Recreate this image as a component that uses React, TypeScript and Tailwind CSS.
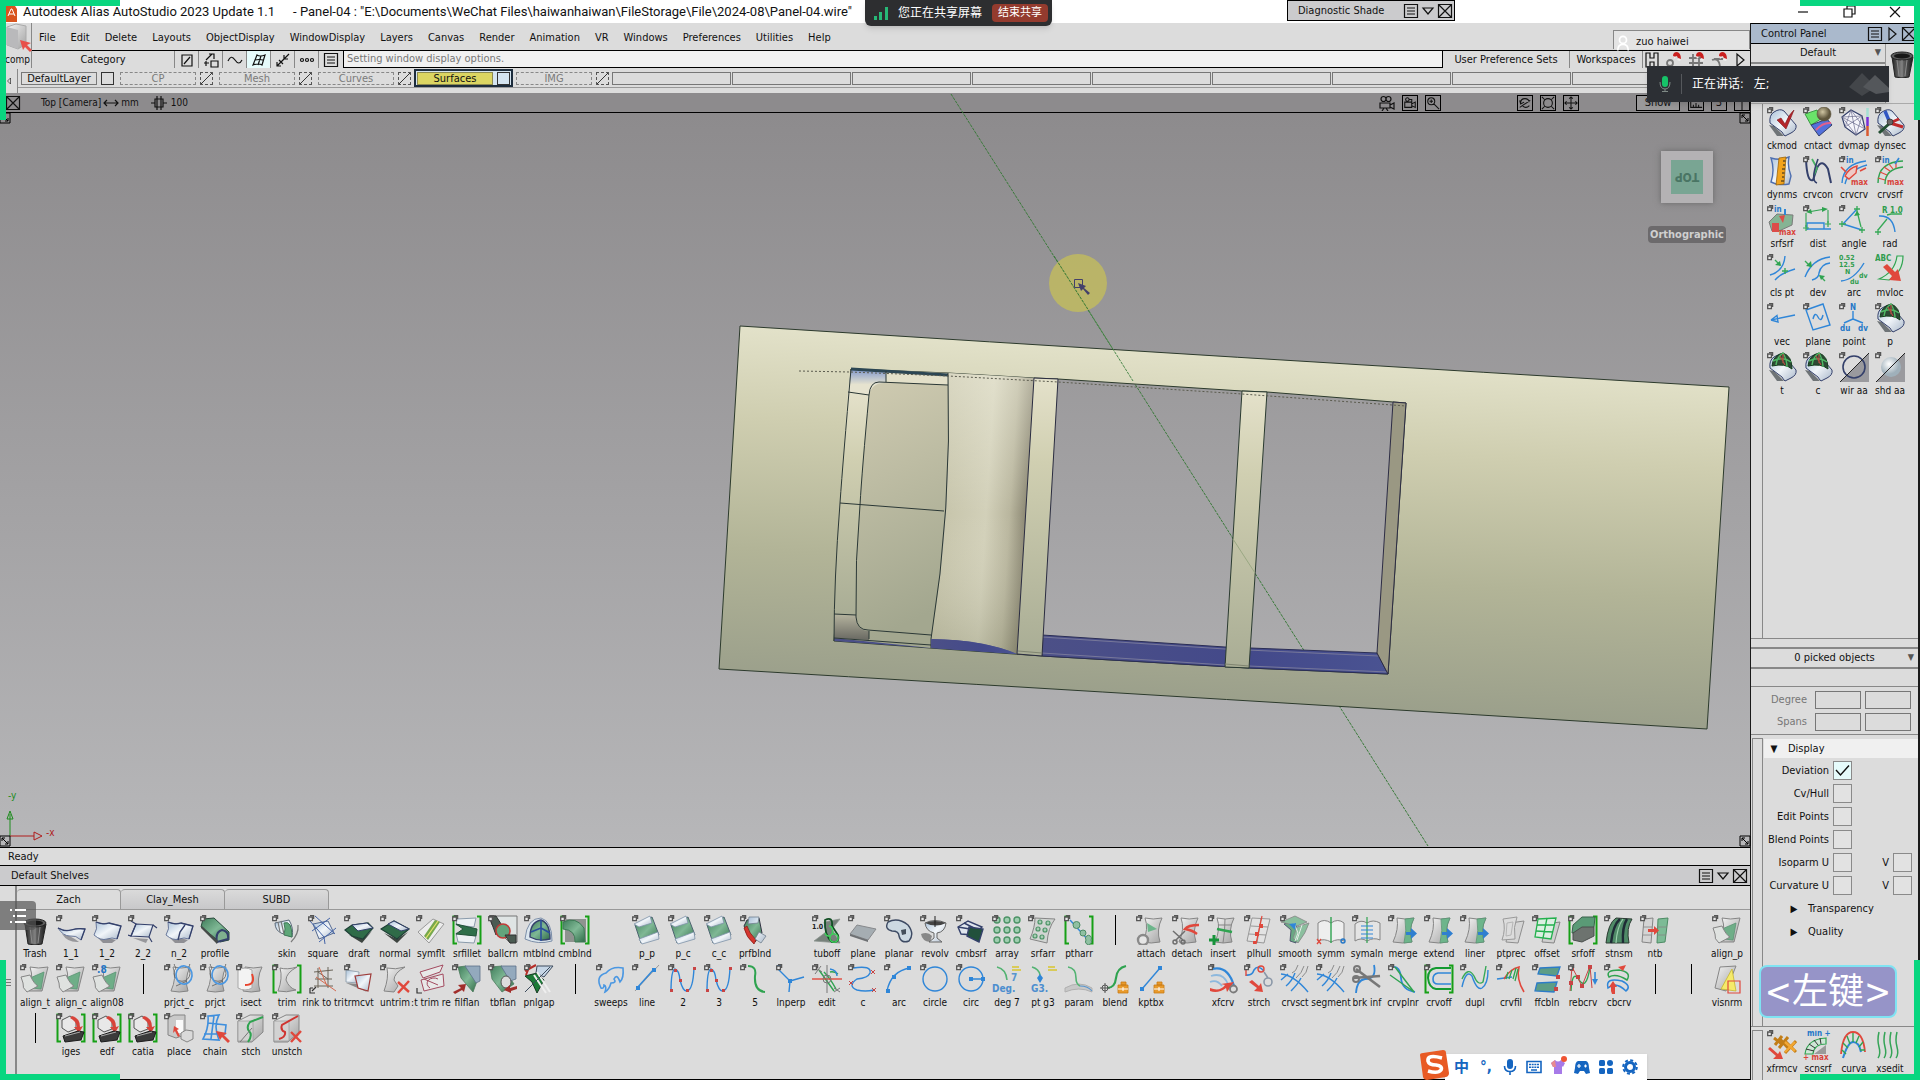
import React from "react";

// [path, fill, stroke, stroke width] or a text label { t, x, y, c, s }
type Shape =
  | [string, string?, string?, number?]
  | { t: string; x: number; y: number; c: string; s?: number };

const NAVY = "#34406b";
const BLUE = "#2f86d8";
const GREEN = "#2fa350";
const RED = "#e0483c";
const GREY = "#858585";
const STEEL = "url(#steel)";
const LEAF = "url(#leaf)";
const ASH = "url(#ash)";

const line = (d: string, c = BLUE, w = 1.4): Shape => [d, "none", c, w];

const brackets: Shape[] = [
  line("M5 1.5H1.5V28.5H5", "#16a016", 2),
  line("M25 1.5H28.5V28.5H25", "#16a016", 2),
];

const sheet: Shape[] = [
  ["M6 6Q15 8 26 2Q20 14 27 24Q17 27 9 29Q12 17 6 6Z", STEEL, "#8d8d8d", 1],
];
const greySheet: Shape[] = [
  ["M9 3Q17 5 26 3Q20 15 24 27Q15 29 7 27Q13 14 9 3Z", ASH, GREY, 1],
];
const patch: Shape[] = [
  ["M5 22L12 22L24 25L20 28H11Z", "#8f8f94", "none"],
  ["M4 7Q11 10 17 8L29 11L25 24Q20 22 15 24Q9 26 2 20Q6 14 4 7Z", STEEL, "#5c6d94", 0.9],
  line("M4 7Q11 10 17 8L29 11L25 24", NAVY, 1.3),
];
const greenBlock: Shape[] = [
  ["M3 10L20 2L27 20L9 28Z", LEAF, "#4d6472", 1],
  ["M2 9L7 12L20 8L18 1Z", STEEL, "#7f93a8", 0.8],
  ["M7 24L10 29L27 24L26 17Z", STEEL, "#7f93a8", 0.8],
];
const tube: Shape[] = [
  ["M2 18L10 29L17 29L7 19Z", "#6f7477", "none"],
  ["M3 16Q2 8 7 5Q13 1 17 4L29 18Q30 23 24 26L18 29Q16 27 15 25Z", STEEL, NAVY, 1],
];
const dome: Shape[] = [
  ...tube,
  ["M5 14Q6 3 16 1Q25 4 25 17Q18 11 5 14Z", "#2d4a35", "#123d1c", 1],
  line("M9 13Q10 5 16 1Q20 8 20 15M6 9Q16 4 24 10", "#4fb965", 1.4),
  line("M13 4L18 13M16 2V11", "#b24c43", 1.2),
];
const arrowOut: Shape[] = [
  ["M9 3Q17 5 26 3Q20 15 24 27Q15 29 5 27Q11 14 9 3Z", ASH, GREY, 1],
  ["M17 4L26 3Q20 15 24 27L16 28Q19 15 17 4Z", "#6db58b", "#5a9473", 0.8],
  ["M18 17H23V13L29 18.5L23 24V20H18Z", "#2f7fd0", "none"],
];
const alignPair: Shape[] = [
  ["M10 3Q18 5 28 3L22 27H9Q14 15 10 3Z", ASH, GREY, 1],
  ["M10 14L24 8L21 25L12 24Z", "#6fae88", "#5a9473", 0.8],
  ["M1 13L10 11Q14 20 18 22L7 28Q2 24 3 19Z", "#dfe2e0", GREY, 1],
];
const crossCircle: Shape[] = [
  ...greySheet,
  line("M12 4A8 8 0 1 0 24 4A8 8 0 1 0 12 4M12 22L23 17", "#5c5c5c", 0.8),
  line("M12 10A8 9 0 1 0 28 12A8 9 0 1 0 12 10", "#4a97e2", 1.7),
];
const nCurve: Shape[] = [
  line("M3 28Q3 6 7 5Q11 6 12 16Q15 28 19 27Q25 26 26 4"),
  ["M2 25H5V28H2ZM6 5H9V8H6ZM11 15H14V18H11ZM18 25H21V28H18ZM25 3H28V6H25Z", "#c84444", "none"],
];
const box: Shape[] = [
  ["M2 8L14 2H27V19L16 29H2Z", ASH, GREY, 1],
  ["M2 8H17V28H2Z", "#d2d2d2", "#a0a0a0", 0.8],
];
const exporter: Shape[] = [
  ...brackets,
  ["M6 7L14 3L20 7V16L12 19L6 15Z", "#e8e8e8", "#555", 1],
  ["M16 3Q24 5 24 14L27 13L23 20L18 14H21Q20 8 14 5Z", "#d8433a", "none"],
  ["M7 23L22 18L28 19L25 27L9 29Z", "#3b3b3b", "#1b1b1b", 1],
  line("M9 23L24 19", "#a9a9a9", 1),
];
const bin: Shape[] = [
  ["M5 9L8 29Q15 31 22 29L26 9Z", "url(#bin)", "#222", 1],
  ["M4 8A11 4 0 1 0 26 8A11 4 0 1 0 4 8", "#5d5d5d", "#222", 1],
  ["M7 8A8 2.4 0 1 0 23 8A8 2.4 0 1 0 7 8", "#171717", "none"],
  line("M10 12L12 28M15 12V29M20 12L18 28", "#8c8c8c", 1),
];
const slashes: Shape[] = [
  line("M1 10Q14 11 28 28M6 22Q12 17 15 9M11 27Q18 20 21 14M1 16L8 10"),
  line("M12 9Q16 8 18 1M22 13Q27 9 28 2M16 14Q22 9 24 2", "#8b8b8b", 1),
];
const toolbox: Shape[] = [
  ["M18 21H28V29H18ZM21 18H26V21H21Z", "#e89a2c", "#c97c14", 0.8],
  line("M18 25H28M23 23V27", "#fff", 1),
];

const glyphs: Record<string, Shape[]> = {
  Trash: bin,
  "1_1": [
    ["M6 19Q14 20 23 27Q12 28 6 19Z", "#97979b", "none"],
    ["M2 13Q9 17 15 15Q22 13 29 14L25 25Q20 20 14 21Q7 21 2 13Z", STEEL, "#5c6d94", 0.9],
    line("M2 13Q9 17 15 15Q22 13 29 14L25 25", NAVY, 1.3),
  ],
  "1_2": patch,
  "2_2": [
    ["M5 23L20 24L18 28Z", "#97979b", "none"],
    ["M8 9L25 10L21 22L3 21Z", STEEL, NAVY, 1.2],
    line("M3 6L8 9L3 21L0 20M25 10L29 13M21 22L24 27", NAVY, 1.2),
  ],
  n_2: [...patch, line("M21 10L16 17L14 25", NAVY, 1.4)],
  profile: [
    ["M3 4L14 3L29 17V25L20 27L1 12Z", LEAF, "#27483a", 1],
    ["M17 27Q15 17 22 15Q29 16 28 24Z", "#7fb08e", NAVY, 2],
    ["M1 13L17 29L18 26L2 11Z", "#464b49", "none"],
  ],
  skin: [
    ["M3 8L17 5Q22 13 20 22L9 18Q3 15 3 8Z", STEEL, "#5b6a7a", 1],
    ["M12 8Q20 5 20 22L12 20Q14 14 12 8Z", "#5da678", "#3e7a57", 1],
    line("M26 10Q27 19 19 27M6 7L8 17M9 6L12 19", "#7a7a7a", 1.2),
  ],
  square: [
    ["M5 9L20 6L26 18L11 24Z", STEEL, "#556a90", 1],
    line("M2 6L16 22L17 29M7 1L27 19M22 3L4 16M28 13L11 27", "#4464a8", 1),
  ],
  draft: [
    ["M5 20L18 28L28 16L19 24Z", "#3d4440", "none"],
    ["M1 15L8 10L24 8L29 13L19 24L8 21Z", "#2f6b48", "#1d3f36", 1.2],
    ["M8 10L14 16L29 13L23 8Z", STEEL, NAVY, 1],
  ],
  normal: [
    ["M4 18L17 28L28 17L17 24Z", "#3d4440", "none"],
    ["M1 14L14 6L29 14L17 24Z", "#2f6b48", "#1d3f36", 1.2],
    ["M8 9L14 6L29 14L21 16Z", STEEL, NAVY, 1],
  ],
  symflt: [
    ["M2 17L17 4L28 9L13 28Z", "#ededed", "#9a9a9a", 1],
    ["M8 21L19 5L24 7L12 25Z", "#77a84d", "none"],
    line("M10 23L22 6", "#e8e36a", 1.2),
  ],
  srfillet: [
    ...brackets,
    ["M5 4L24 3L22 12L4 10ZM4 18L24 21L22 28L6 27Z", "#edf1f4", "#8a9bab", 1],
    ["M4 9L25 14L24 21L4 19L11 14Z", "#2f6f4a", "#235339", 1],
  ],
  ballcrn: [
    ["M1 1H29V27L22 28L14 20L4 10Z", "#dfe4e4", "#777", 1],
    ["M1 1H8L15 12L8 20Z", "#4b5b52", "#333", 1],
    ["M8 16A7 7 0 1 0 22 16A7 7 0 1 0 8 16", "#63a37c", "#c03a36", 1.6],
    ["M17 20L28 20V28H22Z", "#4b5b52", "#333", 1],
  ],
  mtblnd: [
    ["M1 24Q3 3 17 3Q28 6 28 26Q14 30 1 24Z", "#dbe6ee", "#7c8ea8", 1],
    ["M6 22Q6 7 17 5Q26 8 26 24Q15 27 6 22Z", LEAF, NAVY, 1.4],
    line("M17 5V13L7 17M17 13L26 18M17 13V26", "#2a4f9c", 1.6),
  ],
  cmblnd: [
    ...brackets,
    ["M5 4H26V27H5Z", "#8e938f", "none"],
    ["M3 7Q16 1 24 13L25 27H15Q16 15 3 14Z", LEAF, "#3c7a55", 1],
  ],
  p_p: greenBlock,
  p_c: greenBlock,
  c_c: greenBlock,
  prfblnd: [
    ["M7 5L19 3L22 18L15 27Q7 19 4 11Z", LEAF, "#334", 1],
    ["M4 13Q6 22 14 29L16 25Q9 18 7 11Z", "#d5362e", "#8c1d18", 0.8],
    ["M9 2H19L18 8L8 9ZM19 17L26 21L21 28L15 24Z", STEEL, "#71808f", 0.8],
  ],
  tuboff: [
    ["M12 7L28 4L20 14L28 28L2 26L14 17Z", "#77817b", "#8b948f", 0.8],
    { t: "1.0", x: 0, y: 14, c: "#222", s: 7 },
    ["M13 5Q21 1 20 11L26 20Q28 28 20 27Q12 20 13 5Z", "none", "#124f24", 1.8],
    line("M17 11A4 5 0 1 1 13 18M18 22A4 4 0 1 1 26 24A4 4 0 1 1 18 22", "#3fd05b", 1.4),
  ],
  plane: [["M9 10L28 14L20 25L2 19Z", "#a5adb2", "#87898c", 1], ["M2 19L20 25L20 27L2 21Z", "#6d7073", "none"]],
  planar: [
    ["M4 7Q14 2 24 10Q31 19 25 26Q17 29 15 21Q15 16 8 16Q0 14 4 7Z", "#ccd9e2", "#3d4a63", 1.4],
    ["M17 15L22 14V19L18 20Z", "#444f5b", "none"],
  ],
  revolv: [
    ["M1 19Q8 16 12 21L10 27Q2 26 1 19Z", "#888", "none"],
    ["M5 8Q15 3 26 8Q25 17 17 18L17 23L22 27H9L14 23V18Q6 16 5 8Z", STEEL, "#666", 1],
    ["M5 8Q15 4 26 8Q16 13 5 8Z", "#444", "none"],
    line("M15 1V12", "#222", 1),
  ],
  cmbsrf: [
    ["M2 12L12 6L26 12L17 20L5 19Z", "#e0e6ee", NAVY, 1.4],
    ["M13 12L27 14L23 27L11 21Z", "#22513c", NAVY, 1.4],
    line("M8 8L18 13M2 12L14 14", NAVY, 1.4),
  ],
  array: [
    [
      "M2 5A3 3 0 1 0 8 5A3 3 0 1 0 2 5M12 5A3 3 0 1 0 18 5A3 3 0 1 0 12 5M22 5A3 3 0 1 0 28 5A3 3 0 1 0 22 5M2 15A3 3 0 1 0 8 15A3 3 0 1 0 2 15M12 15A3 3 0 1 0 18 15A3 3 0 1 0 12 15M22 15A3 3 0 1 0 28 15A3 3 0 1 0 22 15M2 25A3 3 0 1 0 8 25A3 3 0 1 0 2 25M12 25A3 3 0 1 0 18 25A3 3 0 1 0 12 25M22 25A3 3 0 1 0 28 25A3 3 0 1 0 22 25",
      "#9fceb0",
      "#4d9467",
      1.4,
    ],
  ],
  srfarr: [
    ["M7 3L27 4Q20 13 19 28L2 24Q7 12 7 3Z", "#d2d5d3", GREY, 1],
    [
      "M10 7A2 2 0 1 0 14 7A2 2 0 1 0 10 7M18 8A2 2 0 1 0 22 8A2 2 0 1 0 18 8M8 14A2 2 0 1 0 12 14A2 2 0 1 0 8 14M15 15A2 2 0 1 0 19 15A2 2 0 1 0 15 15M5 21A2 2 0 1 0 9 21A2 2 0 1 0 5 21M12 22A2 2 0 1 0 16 22A2 2 0 1 0 12 22",
      "#a8cdb5",
      "#4d9467",
      1.2,
    ],
  ],
  ptharr: [
    ...brackets,
    line("M6 5L26 27"),
    [
      "M9 10A3 3 0 1 0 16 10A3 3 0 1 0 9 10M16 18A3 3 0 1 0 22 18A3 3 0 1 0 16 18M22 25A3 3 0 1 0 27 25A3 3 0 1 0 22 25",
      "#8fc0a2",
      "#4d8b64",
      1,
    ],
  ],
  attach: [
    ...greySheet,
    ["M11 8L21 14L12 17Z", "#6db58b", "none"],
    ["M2 25A5 5 0 1 0 12 25A5 5 0 1 0 2 25", "#e6e6e6", "#8a8a8a", 2.4],
  ],
  detach: [
    ...greySheet,
    line("M27 10Q16 10 13 14Q20 15 25 19", RED, 2.4),
    line("M1 16L12 26M13 16L3 26M1 27A2 2 0 1 0 5 27A2 2 0 1 0 1 27M9 27A2 2 0 1 0 13 27A2 2 0 1 0 9 27", "#6f6f6f", 1.5),
  ],
  insert: [
    ...greySheet,
    line("M17 4Q17 16 15 28M10 10H23", GREY, 1),
    line("M9 14L24 17", GREEN, 2.4),
    line("M6 20V30M1 25H11", "#16933a", 3),
  ],
  plhull: [
    ["M8 3L26 4L20 28L3 26Z", "#e2e2e2", GREY, 0.8],
    line("M17 3L13 28M7 11L24 12M5 19L22 20", GREY, 0.8),
    line("M18 1L12 29", RED, 1.2),
    ["M15 9H19V13H15ZM11 17H15V21H11ZM9 26H12V29H9Z", RED, "none"],
  ],
  smooth: [
    ["M4 9L14 5L18 16L16 28L10 26L11 15Z", "#6aa884", "#446", 0.8],
    ["M1 7L15 1L27 7L17 11ZM17 12L29 8Q26 18 18 28L13 23Z", "#8bbf9e", GREY, 0.8],
    line("M14 8L18 18L15 26M22 10L17 25", "#e4ece7", 1),
    ["M9 9L16 8L15 15Z", BLUE, "none"],
  ],
  symm: [
    ["M2 8Q8 3 15 8Q22 3 28 8V26Q22 23 15 27Q8 23 2 26Z", "#eeeeee", GREY, 1],
    line("M15 2V28", GREEN, 1.4),
    line("M1 24L5 29M5 24L1 29", RED, 1.3),
    line("M25 26A2 2 0 1 0 29 26A2 2 0 1 0 25 26", "#2477c8", 1.4),
  ],
  symaln: [
    ["M3 9Q9 4 15 8Q21 4 28 8V25Q22 22 15 26Q9 22 3 26Z", "#e4e4e4", GREY, 1],
    line("M15 2V28", GREEN, 1.2),
    line("M9 11H21M9 15H21M9 19H21M9 23H21", BLUE, 1.2),
  ],
  merge: arrowOut,
  extend: arrowOut,
  liner: arrowOut,
  ptprec: [
    ["M14 8L28 6L22 28L10 27Z", "#d5d5d5", "#8e8e8e", 1],
    ["M7 4L21 2Q17 12 19 24L6 25Q10 14 7 4Z", "#dcdcdc", "#9a9a9a", 1],
    line("M11 8L17 7L15 20L10 21Z", "#b5b5b5", 1),
  ],
  offset: [
    ["M14 9L28 7L22 28L10 27Z", "#cfcfcf", GREY, 1],
    ["M6 4L24 3L19 24L3 22Z", "#dcefe2", "#23b04d", 1.3],
    line("M15 3L11 23M5 10L22 10M4 16L21 17", "#23b04d", 1.3),
  ],
  srfoff: [
    ...brackets,
    ["M5 10L14 2H27L26 12L15 16L4 18Z", "#5a9a76", "#38614a", 1],
    ["M5 18L14 12L26 12V21L14 27L5 25Z", "#6d736f", "#4a4f4c", 1],
  ],
  stnsm: [
    ["M2 28Q4 8 12 3L28 4Q22 13 25 28Z", "#4f8a67", "#2c3b32", 1],
    line("M7 28Q9 10 16 4M19 28Q18 12 23 4", "#1f2b36", 2.4),
    line("M12 28Q13 12 19 4", "#9bd1ad", 1.2),
  ],
  ntb: [
    ["M4 4L13 3L11 28L2 27Z", "#d4d4d4", GREY, 1],
    ["M18 4L28 3L25 27L17 28Z", "#7dbb96", "#4d8b64", 1],
    line("M3 12H12M3 20H12M18 12H27M17 20H26", GREY, 0.8),
    ["M8 14H14V11L19 15.5L14 20V17H8Z", RED, "none"],
  ],
  align_p: alignPair,
  align_t: alignPair,
  align_c: alignPair,
  align08: [...alignPair, { t: ".8", x: 5, y: 9, c: "#2477c8", s: 10 }],
  prjct_c: crossCircle,
  prjct: crossCircle,
  isect: [
    ...greySheet,
    ["M2 6Q9 2 16 6V24Q9 28 2 24Z", "#f3f3f3", "#a8a8a8", 1],
    line("M16 10Q20 21 9 21", "#e8452f", 2),
  ],
  trim: [
    ...brackets,
    ["M8 4Q15 6 25 3Q14 9 14 16Q17 24 24 26Q14 29 6 27Q11 14 8 4Z", ASH, GREY, 1],
  ],
  "rink to tri": [
    line("M10 4V24M20 3V24M6 8L25 6M7 15H24M6 22H25M10 8L20 15", "#6a6459", 1),
    line("M8 13L28 27M11 3L19 22", "#d36a50", 1),
    line("M2 24V29H7M2 24H5M4 27L8 23", "#333", 1.2),
  ],
  trmcvt: [
    ["M2 19L14 20L23 28Z", "#888", "none"],
    ["M2 6L15 8L14 19L2 18Z", STEEL, "#8797a6", 0.8],
    ["M11 12L27 10L24 27L14 24Z", STEEL, "#9e3a38", 1.2],
  ],
  untrim: [
    ["M7 4Q15 6 25 3Q14 9 14 16L18 22L14 28L4 27Q9 14 7 4Z", ASH, GREY, 1],
    line("M18 18L29 28M29 17L18 29", RED, 2.4),
  ],
  ":t trim re": [
    ["M4 8L27 1L24 8L7 14ZM5 16L27 10L28 22L8 27Z", "#e8e8e8", "#a34b60", 1],
    line("M8 15L22 21M14 24A5 4 0 0 1 22 15", "#a34b60", 1),
    line("M1 24V29H6", "#333", 1.2),
  ],
  filflan: [
    ["M6 3L14 2L25 17L21 28L9 14Z", LEAF, "#4b7a5c", 0.8],
    ["M13 2H28V17L24 19Z", "#93a9bd", "#5a7088", 0.8],
    ["M1 28L9 24L6 21L14 20L12 28L10 26L3 30Z", "#a12e2b", "none"],
  ],
  tbflan: [
    ["M2 3L14 2L26 20L14 28L4 15Z", LEAF, "#4b7a5c", 0.8],
    ["M13 2H28V15L22 17Z", "#93a9bd", "#5a7088", 0.8],
    ["M13 18A5 6 0 1 0 23 18A5 6 0 1 0 13 18", "#dcdcdc", "#555", 1],
    ["M29 22L22 24V21L16 26L23 29V27L29 25Z", "#a12e2b", "none"],
  ],
  pnlgap: [
    ["M13 2H29L20 13L12 9Z", "#c6d6e6", "#3c4b5c", 1],
    ["M1 12L13 9L20 16L13 29L8 18Z", "#1c7a37", "#173b22", 1],
    line("M13 8L26 28M10 11L22 29", "#eee", 2),
    line("M1 7L12 1M6 1L2 11", "#b62d28", 2),
    line("M1 28L26 3", "#3c4b5c", 1),
  ],
  sweeps: [line("M5 24Q-1 12 10 9Q16 2 27 4Q28 14 24 18Q21 9 18 15Q21 19 15 19Q13 26 9 28Q11 22 8 21Q8 25 5 24Z", "#4a97e2", 1.6)],
  line: [
    line("M3 27L27 1", "#999", 1),
    line("M5 24L22 5"),
    ["M4 22H8V26H4ZM20 4H24V8H20Z", BLUE, "none"],
  ],
  "2": nCurve,
  "3": nCurve,
  "5": [line("M8 2Q17 2 15 12Q14 27 25 28", GREEN, 2)],
  lnperp: [
    line("M1 4L14 17L13 28M14 17L28 13"),
    ["M1 1H5V5H1ZM12 15H16V19H12Z", BLUE, "none"],
  ],
  edit: [
    line("M12 8Q18 14 24 25M18 8Q22 7 26 10M7 6L22 27", GREEN, 1.4),
    line("M0 15H30", RED, 1.4),
    line("M15 1V29M4 4L10 8M3 10L9 2M11 15A4 4 0 1 0 19 15A4 4 0 1 0 11 15M22 24L28 28M22 28L28 24", "#777", 1),
    line("M18 5Q25 6 25 12", BLUE),
  ],
  c: [
    line("M5 4Q24 1 22 9Q20 14 9 15Q-1 22 9 26Q17 28 26 26"),
    line("M23 6L27 10M27 6L23 10M1 17L5 21M5 17L1 21M24 24L28 28M28 24L24 28", "#c84444", 1),
  ],
  arc: [
    line("M3 27Q7 7 26 4"),
    ["M2 25H6V29H2ZM8 11H12V15H8ZM23 2H27V6H23Z", BLUE, "none"],
  ],
  circle: [line("M3 15A12 12 0 1 0 27 15A12 12 0 1 0 3 15")],
  circ: [
    line("M3 15A12 12 0 1 0 27 15A12 12 0 1 0 3 15M15 15H27"),
    ["M13 13H17V17H13ZM25 13H29V17H25Z", BLUE, "none"],
  ],
  "deg 7": [
    line("M5 3Q14 5 15 16", "#53b372", 1.6),
    { t: "7", x: 19, y: 17, c: "#5795cf", s: 10 },
    { t: "Deg.", x: 0, y: 28, c: "#4c8ecf", s: 10 },
    line("M20 3H27M20 6H29", "#d8c52e", 1.6),
  ],
  "pt g3": [
    line("M4 3Q11 5 12 11", "#53b372", 1.6),
    ["M9 14L12 10L15 14L12 19Z", BLUE, "none"],
    { t: "G3.", x: 3, y: 28, c: "#4c8ecf", s: 10 },
    line("M20 3H27M20 6H29", "#d8c52e", 1.6),
  ],
  param: [
    ["M1 24Q15 16 28 24V28Q15 22 1 28Z", "#c8c8c8", "#b0b0b0", 1],
    line("M4 3Q12 4 12 14Q12 20 16 22", "#53b372", 1.6),
    line("M16 22Q24 22 28 27", "#5795cf", 1.2),
  ],
  blend: [
    line("M7 24Q15 24 16 14Q17 4 26 2", GREEN, 2.2),
    line("M5 19V29M0 24H10M2 24A3 3 0 1 0 8 24A3 3 0 1 0 2 24", "#555", 1),
    ...toolbox,
  ],
  kptbx: [line("M6 25L24 4"), ["M4 23H8V27H4ZM22 2H26V6H22Z", BLUE, "none"], ...toolbox],
  xfcrv: [
    line("M4 5Q20 1 26 22", BLUE, 2.2),
    line("M3 12Q15 8 20 20M2 18Q9 15 14 22", "#8db8dd", 1.8),
    ["M2 24Q12 28 17 21L13 20L26 18L19 28L18 24Q10 30 2 27Z", RED, "none"],
    line("M22 25A3.5 3.5 0 1 0 29 25A3.5 3.5 0 1 0 22 25", "#7a7a7a", 1.8),
  ],
  strch: [
    line("M2 11Q8 12 10 6Q14 0 20 7", BLUE, 1.6),
    line("M14 5A3 3 0 1 0 20 5A3 3 0 1 0 14 5M2 6V12", RED, 1.4),
    line("M20 18A4 4 0 1 0 28 18A4 4 0 1 0 20 18M20 8L24 14", "#8b98a8", 1.6),
    ["M5 18L8 16L15 22L17 19L19 28L10 27L13 24Z", RED, "none"],
  ],
  crvsct: slashes,
  segment: slashes,
  "brk inf": [
    line("M22 1Q25 15 13 15Q5 16 4 29", BLUE, 1.8),
    line("M4 5L28 23M1 14L28 12", "#777", 2.6),
    line("M2 5A3 3 0 1 0 8 5A3 3 0 1 0 2 5M1 15A3 3 0 1 0 7 15A3 3 0 1 0 1 15", "#777", 2),
  ],
  crvplnr: [line("M5 3Q12 2 13 14Q14 26 27 28", BLUE, 1.8), line("M2 11L26 28M7 3L26 28", GREEN, 1.4)],
  crvoff: [...brackets, line("M27 4H12Q4 5 4 14Q5 24 12 25H27", "#139a30", 2), line("M27 9H14Q9 10 9 15Q9 20 14 20H27", BLUE, 1.6)],
  dupl: [
    line("M2 23Q6 5 12 12Q17 27 22 24Q28 20 28 6"),
    line("M2 15Q8 2 14 12Q18 22 23 18Q25 8 26 2", "#37a957", 1.4),
  ],
  crvfil: [
    line("M1 15L16 13", BLUE, 1.6),
    line("M8 15Q14 5 23 3Q20 15 28 28", RED, 1.6),
    line("M10 15L12 8M13 15L16 6M17 15L20 4M19 17L22 5", GREEN, 1.3),
  ],
  ffcbln: [
    ["M8 4L28 3L25 12L6 10ZM5 19L25 18L22 28L3 27Z", "#5d9d86", "#2d7cc8", 1.3],
    ["M24 11H28V15H24ZM22 23H26V27H22Z", "#c84444", "none"],
  ],
  rebcrv: [
    line("M3 27Q4 7 10 14Q18 29 22 3", GREEN, 1.4),
    line("M2 27L4 3L14 22L22 2L24 24", "#c84444", 1),
    ["M1 17H5V21H1ZM2 3H6V7H2ZM12 20H16V24H12ZM20 1H24V5H20ZM8 11H12V15H8Z", "#c84444", "none"],
    line("M27 8V17", BLUE, 1.6),
    ["M24 15H30L27 21Z", BLUE, "none"],
  ],
  cbcrv: [
    line("M5 13Q1 6 15 6Q28 8 23 16Q12 9 5 13Z", GREEN, 1.5),
    line("M4 24Q1 13 18 17Q28 22 22 27Q12 17 4 24Z", BLUE, 1.5),
    ["M22 1L14 3L19 7ZM7 27V23H5L9 17L13 23H11V30H8Z", RED, "none"],
  ],
  visnrm: [
    ["M8 3L24 2L14 27L3 24Z", ASH, GREY, 1],
    ["M20 5L24 27L9 25Z", "#f5ea6b", "#c5b52d", 0.8],
    line("M16 17H28V29H16Z", RED, 1.2),
  ],
  iges: exporter,
  edf: exporter,
  catia: exporter,
  place: [
    ["M4 5L10 2H21V22L12 25L4 22Z", "#c9c9c9", GREY, 1],
    ["M12 7H19V20H12Z", "#fafafa", "none"],
    ["M17 20L22 17L29 18V26L23 29L17 26Z", "#dadada", GREY, 1],
    ["M10 13L15 16L13 17L16 23L14 24L11 18L9 20Z", RED, "none"],
  ],
  chain: [
    line("M8 3L19 2Q13 13 19 27L3 26Q9 15 8 3ZM8 10L26 12L25 21L4 21M14 3L11 26", "#3f8fdd", 1.6),
    ["M16 18L27 20L24 22L30 28L28 30L22 24L20 27Z", RED, "none"],
  ],
  stch: [...box, line("M27 4L14 9Q10 14 13 18Q17 22 12 29", GREEN, 2), line("M4 29L16 15", "#777", 1)],
  unstch: [...box, line("M26 3L10 12Q8 17 13 19Q14 24 7 26", "#cf3430", 2), line("M19 19L29 29M29 18L19 29", RED, 2.4)],
  ckmod: [...tube, ["M10 13L14 11L18 17Q22 7 27 3Q23 13 19 22Z", "#b5242a", "#7d171b", 0.6]],
  cntact: [
    ["M2 7L14 3L18 12L8 18Z", "#6ae36a", "#3b9a45", 1],
    ["M8 18L24 12L29 18L16 29Z", "#5270dc", NAVY, 1],
    line("M13 23Q20 15 28 16", "#e0608c", 2),
    ["M14 7A7 7 0 1 0 28 7A7 7 0 1 0 14 7", "url(#ball)", "#5b523a", 0.6],
  ],
  dvmap: [
    ["M3 10L12 3L23 9L26 22L17 28L6 20Z", "#f5f5fb", NAVY, 1.2],
    line("M3 10L17 28L12 3L6 20L23 9L3 10L26 22L12 3M17 28L23 9", "#6a6c8d", 0.7),
    line("M28.5 1V10", "#a6e0d4", 2.5),
    line("M28.5 10V19", "#7a2fd8", 2.5),
    line("M28.5 19V29", "#d85a30", 2.5),
  ],
  dynsec: [
    ...tube,
    line("M15 16L10 4", "#2f57c4", 3.4),
    line("M15 16L28 20M15 16L24 12", "#c02a2c", 3),
    line("M15 16L4 26", "#234f33", 3),
    ["M12 15A3 3 0 1 0 18 15A3 3 0 1 0 12 15", "#666", "#333", 0.8],
  ],
  dynms: [
    ["M4 2Q14 5 22 1Q20 10 24 20L22 28Q12 30 4 26Q8 14 4 2Z", STEEL, "#4e6fb0", 1.4],
    ["M12 2L19 1L17 28L9 29Z", "#f2a31c", "#9b650b", 0.8],
    line("M16 5H18.5M16 9H18M15 13H18M15 17H17.5M15 21H17M14 25H17", "#222", 1),
  ],
  crvcon: [
    line("M3 3Q4 27 10 24L14 12Q19 2 25 13L28 27", NAVY, 2),
    line("M9 3L14 12L11 19", "#49b163", 1.8),
    line("M15 3Q7 25 14 27", NAVY, 1.6),
  ],
  crvcrv: [
    line("M3 27Q4 8 27 5M6 28Q9 14 28 9"),
    ["M6 20Q10 12 18 10L17 17L10 23Z", "#eecac6", RED, 1.4],
    { t: "in", x: 7, y: 7, c: "#2477c8", s: 8 },
    { t: "max", x: 12, y: 29, c: "#d8433a", s: 8 },
    line("M2 11L7 16M27 12L21 15", RED, 1.6),
  ],
  crvsrf: [
    line("M3 27Q3 6 28 5M10 28Q10 13 28 11", GREEN, 1.4),
    line("M3 22L10 24M5 16L12 19M9 11L15 15M14 8L18 13M21 6V12", RED, 1.2),
    { t: "in", x: 7, y: 7, c: "#2477c8", s: 8 },
    { t: "max", x: 12, y: 29, c: "#d8433a", s: 8 },
    line("M24 2L20 8", BLUE, 1.6),
  ],
  srfsrf: [
    ["M2 17L10 9L26 10L25 20L12 26L5 26Z", "#86b494", "#7b7b7b", 1],
    ["M5 18H12V27H5ZM12 11L18 10L16 18Z", "#dc4d49", "none"],
    { t: "in", x: 7, y: 7, c: "#2477c8", s: 8 },
    { t: "max", x: 12, y: 30, c: "#d8433a", s: 8 },
    line("M18 4V10", BLUE, 2),
  ],
  dist: [
    line("M4 25V18H21V24H28M4 24H25"),
    line("M5 7L22 4M3 8V22M25 5V18", GREEN, 1.1),
    line("M0 23H6M3 20V26M22 19H28M25 16V22", "#37a957", 1.2),
    ["M3 7L8 4L9 9ZM25 4L19 2V7Z", GREEN, "none"],
  ],
  angle: [line("M4 19L18 4M4 19L23 25"), line("M18 6L22 22M15 4H21M18 1V7M0 19H7M3 16V22M20 25H26M23 22V28", "#37a957", 1.3), ["M18 6L15 11L21 10Z", GREEN, "none"]],
  rad: [
    line("M4 11Q18 10 20 27"),
    line("M3 25L12 14M12 10L16 9H27M0 27H6M3 24V30", "#37a957", 1.3),
    { t: "R 1.0", x: 7, y: 8, c: "#2f9d4d", s: 8 },
  ],
  "cls pt": [
    line("M18 2Q17 17 3 21M8 26Q14 19 28 15"),
    line("M8 6L13 11M18 14V20M15 17H21", "#37a957", 1.4),
    ["M14 12L8 11L13 7Z", GREEN, "none"],
  ],
  dev: [
    line("M2 23Q9 5 27 3M9 26Q16 24 16 19Q18 10 27 9"),
    line("M2 7L8 13M22 27L17 22", "#37a957", 1.4),
    ["M9 13L3 12L8 7ZM16 21L22 22L18 26Z", GREEN, "none"],
  ],
  arcm: [
    line("M2 27Q15 26 25 9"),
    { t: "0.52", x: 0, y: 6, c: "#2f9d4d", s: 7 },
    { t: "12.5", x: 0, y: 13, c: "#2f9d4d", s: 7 },
    { t: "N", x: 6, y: 20, c: "#2f9d4d", s: 7 },
    { t: "dv", x: 20, y: 24, c: "#2f9d4d", s: 7 },
    { t: "du", x: 11, y: 30, c: "#2f9d4d", s: 7 },
  ],
  mvloc: [
    { t: "ABC", x: 0, y: 7, c: "#2f9d4d", s: 8 },
    ["M22 2H28Q28 18 14 26L4 25Q20 18 22 2Z", "#d8e8dc", GREEN, 1.2],
    ["M8 13L12 10L20 18L23 15L26 27L14 26L17 22Z", RED, "none"],
  ],
  vec: [line("M28 12L4 17L10 12.5L11 19L4 17")],
  planem: [line("M3 7L20 1L27 22L10 27ZM10 16Q12 8 15 14T20 12")],
  point: [
    line("M14 8V16L5 20M14 16L24 20"),
    { t: "N", x: 11, y: 7, c: "#2477c8", s: 8 },
    { t: "du", x: 1, y: 28, c: "#2477c8", s: 8 },
    { t: "dv", x: 19, y: 28, c: "#2477c8", s: 8 },
  ],
  dome,
  "wir aa": [
    ["M30 1V30H1Z", "#9a9a9e", "none"],
    line("M4 15A11 11 0 1 0 26 15A11 11 0 1 0 4 15", NAVY, 1.6),
    line("M1 30L30 1", "#222", 1),
  ],
  "shd aa": [
    ["M30 1V30H1Z", "#9a9a9e", "none"],
    ["M6 15A10 10 0 1 0 26 15A10 10 0 1 0 6 15", "url(#pearl)", "none"],
    line("M1 30L30 1", "#222", 1),
  ],
  xfrmcv: [
    line("M7 8L15 14M15 6L8 15M12 8L22 19M21 7L12 18M18 11L29 22M29 11L18 23", "#c27d17", 3),
    line("M18 12L28 21M28 12L18 22", "#f2a733", 2.4),
    ["M1 19L3 17L11 24L13 21L16 29L6 29L9 26Z", RED, "none"],
  ],
  scnsrf: [
    { t: "min +", x: 4, y: 6, c: "#2477c8", s: 8 },
    ["M2 24Q4 9 23 8V14Q11 14 10 24Z", "#cfe6d6", GREEN, 1.2],
    line("M3 19L11 21M6 14L12 18M11 10L15 15M17 8L18 14", "#333", 1),
    ["M11 24L23 15V24Z", "#9a9a9a", "none"],
    { t: "+ max", x: 0, y: 30, c: "#d8433a", s: 8 },
  ],
  curva: [
    line("M2 24Q4 2 14 2Q24 2 26 22", RED, 1.8),
    line("M4 28Q9 12 14 12Q20 12 22 22", BLUE, 2),
    line("M3 20L7 24M4 13L9 18M8 6L11 14M14 3V12M20 6L17 13M24 12L20 17M26 20L21 20", GREEN, 1.4),
  ],
  xsedit: [
    line("M4 2Q2 10 4 17T3 28M10 2Q8 10 10 17T9 28M16 2Q14 10 16 17T15 28M22 2Q20 10 22 17T21 28", "#35a457", 1.5),
  ],
};

const noMarker = ["Trash", "rink to tri", ":t trim re", "symm", "brk inf", "deg 7", "pt g3", "param", "blend", "kptbx", "ptprec", "visnrm", "dynms", "rad", "dev", "arcm", "mvloc", "scnsrf", "curva", "xsedit"];

const Glyph = ({ name }: { name: string }) => (
  <svg viewBox="0 0 30 30" className="block size-[30px]" aria-hidden="true">
    {(glyphs[name] ?? sheet).map((s, i) =>
      Array.isArray(s) ? (
        <path key={i} d={s[0]} fill={s[1]} stroke={s[2]} strokeWidth={s[3]} />
      ) : (
        <text key={i} x={s.x} y={s.y} fill={s.c} fontSize={s.s} fontWeight="700">
          {s.t}
        </text>
      )
    )}
    {!noMarker.includes(name) && (
      <g fill="#e6e6e6" stroke="#555" strokeWidth="1.3">
        <path d="M2 .7H5.6V4" fill="none" />
        <path d="M.7 2H4.4V5.700H.7Z" />
      </g>
    )}
  </svg>
);

// "|" is a separator, "" an empty slot
const Tool = ({ label, icon }: { label: string; icon?: string }) => {
  if (label === "") return <div />;
  if (label === "|")
    return (
      <div className="flex justify-center">
        <div className="h-[30px] w-px bg-black" />
      </div>
    );
  return (
    <button className="flex h-[49px] flex-col items-center">
      <Glyph name={icon ?? label} />
      <span className="whitespace-nowrap text-[10px] leading-[17px]">{label}</span>
    </button>
  );
};

const shelf = [
  ["Trash", "1_1", "1_2", "2_2", "n_2", "profile", "", "skin", "square", "draft", "normal", "symflt", "srfillet", "ballcrn", "mtblnd", "cmblnd", "", "p_p", "p_c", "c_c", "prfblnd", "", "tuboff", "plane", "planar", "revolv", "cmbsrf", "array", "srfarr", "ptharr", "|", "attach", "detach", "insert", "plhull", "smooth", "symm", "symaln", "merge", "extend", "liner", "ptprec", "offset", "srfoff", "stnsm", "ntb", "", "align_p"],
  ["align_t", "align_c", "align08", "|", "prjct_c", "prjct", "isect", "trim", "rink to tri", "trmcvt", "untrim", ":t trim re", "filflan", "tbflan", "pnlgap", "|", "sweeps", "line", "2", "3", "5", "lnperp", "edit", "c", "arc", "circle", "circ", "deg 7", "pt g3", "param", "blend", "kptbx", "", "xfcrv", "strch", "crvsct", "segment", "brk inf", "crvplnr", "crvoff", "dupl", "crvfil", "ffcbln", "rebcrv", "cbcrv", "|", "|", "visnrm"],
  ["|", "iges", "edf", "catia", "place", "chain", "stch", "unstch"],
];

const controlTools: [string, string?][] = [
  ["ckmod"], ["cntact"], ["dvmap"], ["dynsec"],
  ["dynms"], ["crvcon"], ["crvcrv"], ["crvsrf"],
  ["srfsrf"], ["dist"], ["angle"], ["rad"],
  ["cls pt"], ["dev"], ["arc", "arcm"], ["mvloc"],
  ["vec"], ["plane", "planem"], ["point"], ["p", "dome"],
  ["t", "dome"], ["c", "dome"], ["wir aa"], ["shd aa"],
];

const menus = ["File", "Edit", "Delete", "Layouts", "ObjectDisplay", "WindowDisplay", "Layers", "Canvas", "Render", "Animation", "VR", "Windows", "Preferences", "Utilities", "Help"];

const Line = ({ d, className = "size-4" }: { d: string; className?: string }) => (
  <svg viewBox="0 0 16 16" className={className} fill="none" stroke="#111" strokeWidth="1.2" aria-hidden="true">
    <path d={d} />
  </svg>
);

const LIST = "M1.5 1.5H14.5V14.5H1.5ZM4 5H12M4 8H12M4 11H12";
const CROSSBOX = "M1.5 1.5H14.5V14.5H1.5ZM2 2L14 14M14 2L2 14";
const DOWN = "M3 5H13L8 11Z";
const RIGHT = "M5 2V14L12 8Z";

const PanelIcons = ({ mid }: { mid: string }) => (
  <div className="flex items-center gap-px">
    <button aria-label="Options"><Line d={LIST} /></button>
    <button aria-label="Collapse"><Line d={mid} /></button>
    <button aria-label="Close"><Line d={CROSSBOX} /></button>
  </div>
);

const modeIcons: [string, string][] = [
  ["Pick nothing", "M3 3H13V14H3ZM5 12L11 5"],
  ["Pick object", "M8 9H15V15H8ZM1 11H6M3 9V14M3 8L9 2M6 2H11V7"],
  ["Pick curve", "M1 9Q4 2 8 8T15 8"],
  ["Pick surface", "M6 3Q9 5 14 3L11 13Q8 11 2 13ZM4 8Q8 7 12 8M10 4L7 13"],
  ["Pick point", "M2 14L14 2M2 10V14H6M9 3V7H13M4 8L8 12"],
  ["More", "M1.5 8A1.5 1.5 0 1 0 4.5 8A1.5 1.5 0 1 0 1.5 8M6.5 8A1.5 1.5 0 1 0 9.5 8A1.5 1.5 0 1 0 6.5 8M11.5 8A1.5 1.5 0 1 0 14.5 8A1.5 1.5 0 1 0 11.5 8"],
];

const ModeBar = () => (
  <div className="flex h-[18px] items-stretch border-t border-black bg-[#dcdcdc]">
    <button className="w-[143px] border-r border-[#888]">Category</button>
    {modeIcons.map(([name, d]) => (
      <button
        key={name}
        aria-label={name}
        className={`flex w-6 items-center justify-center border-r border-[#888] ${name === "Pick surface" ? "bg-[#e6fbfb]" : ""}`}
      >
        <Line d={d} />
      </button>
    ))}
    <button aria-label="History" className="flex w-6 items-center justify-center"><Line d={LIST} /></button>
    <input
      readOnly
      aria-label="Prompt line"
      value="Setting window display options."
      className="min-w-0 flex-1 border-x border-b border-black bg-[#f1f1f1] px-[3px] text-[#777] outline-none"
    />
    <button className="w-[127px] border-r border-[#888]">User Preference Sets</button>
    <button className="w-[73px] border-r border-[#888]">Workspaces</button>
    <button aria-label="History toggle" className="flex w-[18px] items-center justify-center">
      <Line d="M2 1H6V6H10V1H14V15H10V10H6V15H2Z" />
    </button>
    {["M2 11A3 3 0 1 0 8 11A3 3 0 1 0 2 11", "M5 2V15M11 2V15M1 6H15M1 11H15", "M1 8Q8 5 9 15M3 7H12"].map((d) => (
      <button key={d} aria-label="Snap" className="flex w-[23px] items-center justify-center">
        <svg viewBox="0 0 16 16" className="size-4">
          <path d={d} fill="none" stroke="#777" strokeWidth="1.8" />
          <path d="M8 4Q8 0 12 0Q16 1 16 7L13 8Q13 4 11 4L9 6Z" fill="#c9201f" />
          <path d="M8 4L11 5L9 7ZM13 6L16 7L15 9L12 8Z" fill="#eee" />
        </svg>
      </button>
    ))}
    <button aria-label="More snaps" className="flex w-5 items-center justify-center"><Line d={RIGHT} /></button>
  </div>
);

const Layer = ({ name, state }: { name: string; state: "normal" | "hidden" | "active" }) => {
  const active = state === "active";
  const hidden = state === "hidden";
  return (
    <div className={`flex h-[18px] items-center gap-1 px-px ${active ? "border-2 border-[#1c2c3c] bg-[#d4e4f0]" : "mx-[2px]"}`}>
      <button
        className={`h-[13px] w-[76px] border leading-[11px] ${
          active ? "border-[#8d8a50] bg-[#dbd562]" : hidden ? "border-dashed border-[#888] text-[#7a7a7a]" : "border-[#777]"
        }`}
      >
        {name}
      </button>
      <button
        aria-label={`${name} visibility`}
        className={`size-[13px] border ${hidden ? "border-dashed border-[#555]" : "border-[#333]"}`}
      >
        {hidden && <Line d="M0 16L16 0" className="size-[11px]" />}
      </button>
    </div>
  );
};

const LayerBar = () => (
  <div className="flex h-[25px] items-start overflow-hidden bg-[#dcdcdc] pt-px">
    <button aria-label="Scroll layers" className="flex h-6 w-[18px] items-center justify-end border-r border-[#888] pr-1">
      <Line d="M11 2V14L5 8Z" className="h-3 w-2" />
    </button>
    <div className="flex min-w-0 flex-1 items-center border-b border-[#999]">
      <Layer name="DefaultLayer" state="normal" />
      <Layer name="CP" state="hidden" />
      <Layer name="Mesh" state="hidden" />
      <Layer name="Curves" state="hidden" />
      <Layer name="Surfaces" state="active" />
      <Layer name="IMG" state="hidden" />
      <div className="flex min-w-0 flex-1 gap-px overflow-hidden">
        {Array.from({ length: 10 }, (_, i) => (
          <div key={i} className="h-[13px] w-[119px] shrink-0 border border-[#777]" />
        ))}
      </div>
    </div>
  </div>
);

const ViewHeader = () => {
  const box = "flex size-4 items-center justify-center border border-black";
  return (
    <div className="flex h-5 items-center border-b border-black bg-[#8d8b8d] pl-[5px]">
      <button aria-label="Close view" className="mr-5"><Line d={CROSSBOX} /></button>
      <div className="flex items-center text-[10px]">
        <span>Top [Camera]</span>
        <Line d="M1 8H15M4 5L1 8L4 11M12 5L15 8L12 11" className="mx-[2px] h-4 w-4" />
        <span>mm</span>
        <Line d="M4 4H12V12H4ZM0 8H4M12 8H16M6 1V15M10 1V15" className="ml-3 mr-1 h-4 w-4" />
        <span>100</span>
      </div>
      <div className="flex-1" />
      <div className="flex items-center gap-[7px]">
        <button aria-label="Camera"><Line d="M1 8H11V13H1ZM11 10L15 8V14L11 12M2 4A2.5 2.5 0 1 0 7 4A2.5 2.5 0 1 0 2 4M7 4A2.5 2.5 0 1 0 12 4A2.5 2.5 0 1 0 7 4M3 16L5 13M9 16L7 13" /></button>
        <button aria-label="Bookmark view" className={box}><Line d="M2 7H10V13H2ZM10 9L14 7V13L10 11M3 4A2 2 0 1 0 7 4A2 2 0 1 0 3 4M7 4H10V7" /></button>
        <button aria-label="Zoom" className={box}><Line d="M2 6A4 4 0 1 0 10 6A4 4 0 1 0 2 6M9 9L15 15M4 6H8M6 4V8" /></button>
      </div>
      <div className="ml-[76px] mr-[57px] flex items-center gap-[7px]">
        <button aria-label="Twist" className={box}><Line d="M2 13L14 5M3 8Q3 3 8 3Q12 3 13 7M5 11Q9 15 13 11M2 5L3 9L7 7" /></button>
        <button aria-label="Look at" className={box}><Line d="M3 8A5 5 0 1 0 13 8A5 5 0 1 0 3 8M1 1L4 4M15 1L12 4M1 15L4 12M15 15L12 12" /></button>
        <button aria-label="Pan" className={box}><Line d="M8 1V15M1 8H15M6 3L8 1L10 3M6 13L8 15L10 13M3 6L1 8L3 10M13 6L15 8L13 10" /></button>
      </div>
      <button className="h-4 w-11 border border-black bg-[#9a999a] leading-[14px]">Show</button>
      <div className="ml-2 flex items-center gap-[7px]">
        <button aria-label="Ruler" className={box}><Line d="M2 2V13H15M5 10V13M8 8V13M11 10V13" /></button>
        <button aria-label="View three" className={box}>3</button>
        <button aria-label="Split" className={box}><Line d="M8 0V16" /></button>
      </div>
    </div>
  );
};

const CORNER = "M0 0H10V10H0ZM2 2L8 8M2 5V2H5M8 5V8H5";

const Viewport = () => (
  <div className="relative min-h-0 flex-1 bg-linear-to-b from-[#8d8b8d] to-[#b7b7b9]">
    {/* overflow stays visible: the construction line runs on over the view header */}
    <svg viewBox="0 113 1750 734" preserveAspectRatio="xMidYMid slice" className="absolute inset-0 size-full overflow-visible" fill="none">
      <defs>
        <linearGradient id="steel" x1="0" y1="0" x2="1" y2="1">
          <stop offset="0" stopColor="#a8c0d8" />
          <stop offset=".5" stopColor="#f1f5f9" />
          <stop offset="1" stopColor="#a9b8ca" />
        </linearGradient>
        <linearGradient id="leaf" x1="0" y1="0" x2="1" y2="1">
          <stop offset="0" stopColor="#3f7d5a" />
          <stop offset=".5" stopColor="#7fb895" />
          <stop offset="1" stopColor="#2f6b48" />
        </linearGradient>
        <linearGradient id="ash" x1="0" y1="0" x2="1" y2="1">
          <stop offset="0" stopColor="#f4f4f4" />
          <stop offset="1" stopColor="#a2a2a2" />
        </linearGradient>
        <linearGradient id="bin" x1="0" x2="1">
          <stop offset="0" stopColor="#222" />
          <stop offset=".4" stopColor="#777" />
          <stop offset="1" stopColor="#1c1c1c" />
        </linearGradient>
        <radialGradient id="ball" cx=".4" cy=".35">
          <stop offset="0" stopColor="#cfc5a2" />
          <stop offset="1" stopColor="#5e553c" />
        </radialGradient>
        <radialGradient id="pearl" cx=".4" cy=".35">
          <stop offset="0" stopColor="#ffffff" />
          <stop offset="1" stopColor="#9fb0ba" />
        </radialGradient>
        <linearGradient id="body" gradientUnits="userSpaceOnUse" x1="1060" y1="340" x2="1040" y2="715">
          <stop offset="0" stopColor="#e3e2ca" />
          <stop offset=".25" stopColor="#cfceb0" />
          <stop offset=".6" stopColor="#b2b497" />
          <stop offset="1" stopColor="#979c89" />
        </linearGradient>
        <linearGradient id="bar" x1="0" y1="0" x2="0" y2="1">
          <stop offset="0" stopColor="#e4e1ca" />
          <stop offset=".3" stopColor="#d0cfb1" />
          <stop offset="1" stopColor="#a9ad95" />
        </linearGradient>
        <linearGradient id="barrel" gradientUnits="userSpaceOnUse" x1="935" y1="500" x2="1029" y2="506">
          <stop offset="0" stopColor="#c4c2a8" />
          <stop offset=".55" stopColor="#d2d0b9" />
          <stop offset=".8" stopColor="#b9b69e" />
          <stop offset="1" stopColor="#85816d" />
        </linearGradient>
        <linearGradient id="glow" x1="0" y1="0" x2="0" y2="1">
          <stop offset="0" stopColor="#fffdf0" stopOpacity=".35" />
          <stop offset=".5" stopColor="#fffdf0" stopOpacity="0" />
          <stop offset="1" stopColor="#6f7458" stopOpacity=".25" />
        </linearGradient>
        <linearGradient id="door" x1="0" y1="0" x2="0.2" y2="1">
          <stop offset="0" stopColor="#d3ceb4" />
          <stop offset="1" stopColor="#a3a78f" />
        </linearGradient>
        <linearGradient id="blue" x1="0" x2="1">
          <stop offset="0" stopColor="#4c5087" />
          <stop offset=".6" stopColor="#43498a" />
          <stop offset="1" stopColor="#4a5392" />
        </linearGradient>
        <linearGradient id="lip" x1="0" y1="0" x2="0" y2="1">
          <stop offset="0" stopColor="#7f97cc" />
          <stop offset=".6" stopColor="#e6e3cf" />
        </linearGradient>
        <linearGradient id="foot" x1="0" y1="0" x2="0" y2="1">
          <stop offset="0" stopColor="#b6b49f" />
          <stop offset="1" stopColor="#696962" />
        </linearGradient>
      </defs>
      <path d="M951 94L1428 846" stroke="#3a7a3a" strokeDasharray="3 1" />
      {/* panel with the window cut out */}
      <path
        fillRule="evenodd"
        fill="url(#body)"
        stroke="#2c3a2c"
        d="M740 326Q1240 358 1729 387L1707 729Q1240 700 719 669ZM851 369L948 373L1034 378L1058 379L1242 391L1267 392L1406 403L1388 674L1249 668L1042 656L930 648L834 641Z"
      />
      {/* sill */}
      <path d="M1042 635L1225 647L1377 653L1388 674L1249 668L1042 656Z" fill="url(#blue)" stroke="#2b2e55" />
      <path d="M1042 637L1225 649L1379 656M1042 653L1225 665L1388 672" stroke="#77789a" />
      <path d="M931 636L1000 640L1017 654L931 648L834 641V637Z" fill="url(#blue)" />
      <path d="M1393 402L1406 403L1388 674L1377 653Z" fill="#9a9883" stroke="#2c2c44" />
      {/* door and its frame */}
      <path d="M851 369L948 373Q951 520 931 648L834 638V614Q838 500 851 369Z" fill="url(#door)" />
      <path d="M851 369L886 371V383Q872 382 869 395L848 392Z" fill="url(#lip)" />
      <path d="M886 372L948 374V385L886 382Z" fill="#e3e0c9" />
      <path d="M834 614L856 615Q856 631 869 631V640L834 638Z" fill="url(#foot)" />
      <path d="M848 392L869 395Q862 470 860 505Q855 560 856 615L834 614Q838 510 848 392Z" fill="url(#bar)" />
      <path d="M851 369L948 375" stroke="#2c4653" strokeWidth="3" />
      <path
        d="M948 385L879 382Q870 382 869 395Q862 470 860 505Q855 560 856 617Q857 630 868 630L931 635M851 369Q843 460 840 503Q834 580 834 641M848 392L869 395M834 614L856 615M886 371V382M869 631V639M840 503L944 511M834 638L931 645"
        stroke="#2b3836"
      />
      <path d="M948 373L1034 378L1017 654Q985 640 931 639Q952 520 948 373Z" fill="url(#barrel)" />
      <path d="M948 373L1034 378L1017 654Q985 640 931 639Q952 520 948 373Z" fill="url(#glow)" />
      <path d="M948 373Q952 510 931 639V648" stroke="#2b3836" />
      <path d="M931 639Q985 640 1017 654L931 648Z" fill="url(#blue)" />
      {/* mullions */}
      <path d="M1034 378L1058 379L1042 656L1017 654Z" fill="url(#bar)" stroke="#2a2c40" />
      <path d="M1242 391L1267 392L1249 668L1225 667Z" fill="url(#bar)" stroke="#2a3a30" />
      <path d="M1018 651L1042 653M1225 664L1249 666" stroke="#7f8470" />
      <path d="M799 371L850 372L948 376L1058 382L1242 394L1406 406" stroke="#5b5b4e" strokeDasharray="2 2" />
      {/* construction line where it shows over the panel */}
      <path d="M1089 311L1133 381" stroke="#4d8a4d" strokeDasharray="3 1" />
      <path d="M1233 539L1255 573" stroke="#9aa883" />
      {/* pick cursor */}
      <circle cx="1078" cy="283" r="29" fill="#c5bf58" fillOpacity=".75" />
      <path d="M1054 256L1089 311" stroke="#3a7a3a" strokeDasharray="3 1" />
      <path d="M1074.5 279.5H1082.5V287.5H1074.5Z" stroke="#44406a" />
      <path d="M1078 283L1086 286L1084 288L1090 293L1088 295L1083 289L1081 291Z" fill="#44406a" />
      {/* axes */}
      <path d="M10 836V814M7 819L10 811L13 819Z" stroke="#1c8c1c" />
      <path d="M10 836H34M34 832L42 836L34 840Z" stroke="#b01c1c" />
      <text x="8" y="799" fontSize="10" fill="#1c8c1c">-y</text>
      <text x="46" y="836" fontSize="10" fill="#b01c1c">-x</text>
      <g stroke="#000">
        <path d={CORNER} transform="translate(0 113)" />
        <path d={CORNER} transform="translate(1740 113)" />
        <path d={CORNER} transform="translate(0 836)" />
        <path d={CORNER} transform="translate(1740 836)" />
      </g>
    </svg>
    <div className="absolute right-6 top-[38px] flex w-[78px] flex-col items-center">
      <div className="flex size-[52px] items-center justify-center bg-[#b4b2b4] shadow-[0_0_6px_#666]">
        <div className="flex h-[34px] w-8 rotate-180 items-center justify-center bg-[#79a593] text-[12px] font-bold text-[#4a7564]">TOP</div>
      </div>
      <div className="mt-[23px] rounded-sm bg-[#6c6a6c] px-[2px] text-[11px] font-bold leading-[17px] text-[#cfcfcf]">Orthographic</div>
    </div>
  </div>
);

const Shelves = () => (
  <section className="border-t border-black bg-[#dcdcdc]">
    <div className="flex h-[20px] items-center justify-between border-b border-black bg-[#cbcbcd] pl-[11px] pr-[2px]">
      <span>Default Shelves</span>
      <PanelIcons mid={DOWN} />
    </div>
    <div className="flex h-[194px] border-b border-black">
      <div className="flex w-[17px] items-center justify-end border-r-2 border-[#888] pr-1">
        <div className="flex w-[6px] flex-col gap-[2px]">
          <div className="h-px bg-[#777]" />
          <div className="h-px bg-[#777]" />
          <div className="h-px bg-[#777]" />
        </div>
      </div>
      <div className="min-w-0 flex-1">
        <div className="flex h-6 items-end border-b border-[#999]">
          <button className="h-5 w-[104px] rounded-t-sm border-r border-t border-[#999]">Zach</button>
          <button className="h-5 w-[104px] rounded-t-sm border-r border-t border-[#999] bg-linear-to-b from-[#dadada] to-[#c8c8ca]">Clay_Mesh</button>
          <button className="h-5 w-[104px] rounded-t-sm border-r border-t border-[#999] bg-linear-to-b from-[#dadada] to-[#c8c8ca]">SUBD</button>
        </div>
        <div className="pt-[5px]">
          {shelf.map((row, r) => (
            <div key={r} className="grid grid-cols-[repeat(48,36px)]">
              {row.map((label, i) => (
                <Tool key={i} label={label} />
              ))}
            </div>
          ))}
        </div>
      </div>
    </div>
  </section>
);

const Check = ({ label, checked }: { label: string; checked?: boolean }) => (
  <label className="flex h-[23px] items-center gap-1">
    <span>{label}</span>
    <span className="relative size-[19px]">
      <input
        type="checkbox"
        defaultChecked={checked}
        className="peer block size-[19px] appearance-none border border-[#8a8a8a] bg-[#e2e2e2] checked:bg-[#e6fbfb]"
      />
      <svg viewBox="0 0 19 19" className="pointer-events-none absolute inset-0 hidden peer-checked:block" fill="none" stroke="#111" strokeWidth="1.4">
        <path d="M3 9L7.5 14L16 4.5" />
      </svg>
    </span>
  </label>
);

const ControlPanel = () => (
  <aside className="flex w-[170px] shrink-0 flex-col border-l border-r-2 border-[#1a1a1a] bg-[#dcdcdc]">
    <div className="flex h-[21px] shrink-0 items-center justify-between border-y border-black bg-[#aab9cc] pl-[10px] pr-px">
      <span>Control Panel</span>
      <PanelIcons mid={RIGHT} />
    </div>
    <div className="flex h-[60px] shrink-0 border-b border-[#aaa]">
      <div className="w-[135px] border-r border-[#999]">
        <div className="relative border-b-2 border-[#888]">
          <select aria-label="Tool set" className="h-[18px] w-full appearance-none text-center outline-none [text-align-last:center]">
            <option>Default</option>
          </select>
          <div className="pointer-events-none absolute right-1 top-0 text-[9px] leading-[16px] text-[#555]">▼</div>
        </div>
        <div className="flex items-center justify-end gap-10 pr-1">
          <span>To Render</span>
          <div className="size-[13px] border border-black" />
        </div>
      </div>
      <button aria-label="Trash" className="ml-px mt-[4px] self-start"><Glyph name="Trash" /></button>
    </div>
    <div className="flex min-h-0 flex-1">
      <div className="ml-px w-[11px] border-r border-[#888]" />
      <div className="grid grid-cols-[repeat(4,36px)] content-start pl-px pt-[3px]">
        {controlTools.map(([label, icon], i) => (
          <Tool key={i} label={label} icon={icon} />
        ))}
      </div>
    </div>
    <div className="h-[9px] shrink-0 border-t border-[#888]" />
    <div className="relative border-y-2 border-[#888]">
      <select aria-label="Picked objects" className="block h-[18px] w-full appearance-none text-center outline-none [text-align-last:center]">
        <option>0 picked objects</option>
      </select>
      <div className="pointer-events-none absolute right-1 top-0 text-[9px] leading-[17px] text-[#555]">▼</div>
    </div>
    <div className="h-[18px] shrink-0 border-b border-[#888]" />
    <div className="grid h-[48px] shrink-0 grid-cols-[1fr_46px_46px] content-center items-center gap-x-1 gap-y-1 border-b border-[#888] pr-[7px] text-[#777]">
      {["Degree", "Spans"].map((name) => (
        <React.Fragment key={name}>
          <span className="pr-1 text-right">{name}</span>
          <input disabled aria-label={`${name} U`} className="h-[18px] min-w-0 border border-[#777]" />
          <input disabled aria-label={`${name} V`} className="h-[18px] min-w-0 border border-[#777]" />
        </React.Fragment>
      ))}
    </div>
    <div className="flex h-[292px] shrink-0 border-b border-[#888] pt-[3px]">
      <div className="ml-px w-[11px] shrink-0 border-x border-t border-[#888]" />
      <div className="flex-1 pl-px pt-px">
        <button className="flex h-[19px] w-full items-center gap-2 bg-[#f0f0f0] pl-1">
          <span className="w-3 text-[10px]">▼</span>Display
        </button>
        <div className="grid grid-cols-[88px_1fr] justify-items-end pr-[6px] pt-px">
          <Check label="Deviation" checked />
          <span />
          <Check label="Cv/Hull" />
          <span />
          <Check label="Edit Points" />
          <span />
          <Check label="Blend Points" />
          <span />
          <Check label="Isoparm U" />
          <Check label="V" />
          <Check label="Curvature U" />
          <Check label="V" />
        </div>
        <button className="flex h-[23px] items-center gap-2 pl-6 pt-px"><span className="w-3 text-[10px]">▶</span>Transparency</button>
        <button className="flex h-[23px] items-center gap-2 pl-6 pt-px"><span className="w-3 text-[10px]">▶</span>Quality</button>
      </div>
    </div>
    <div className="flex h-[53px] shrink-0 pt-[3px]">
      <div className="ml-px w-[11px] border-x border-t border-[#888]" />
      <div className="grid grid-cols-[repeat(4,36px)] pl-px">
        {["xfrmcv", "scnsrf", "curva", "xsedit"].map((label) => (
          <Tool key={label} label={label} />
        ))}
      </div>
    </div>
  </aside>
);

const ShareBar = () => (
  <div className="absolute left-[865px] top-0 flex h-[26px] items-center rounded-b-md bg-[#2d2e30] pl-[9px] pr-1 text-white shadow-md">
    <svg viewBox="0 0 14 13" className="mr-[10px] h-[13px] w-[14px]" fill="#27b877">
      <path d="M0 9H3V13H0ZM5 5H8V13H5ZM11 0H14V13H11Z" />
    </svg>
    <span className="text-[12px]">您正在共享屏幕</span>
    <button className="ml-[10px] h-[18px] rounded bg-[#943b2e] px-[6px] text-[11px] leading-[18px]">结束共享</button>
  </div>
);

const SpeakerToast = () => (
  <div className="absolute right-[31px] top-[66px] flex h-[36px] w-[242px] items-center bg-[#2c2f34] pl-[12px] text-[12px] text-white shadow-md">
    <svg viewBox="0 0 12 16" className="h-4 w-3" fill="none">
      <rect x="3" y="0" width="6" height="11" rx="3" fill="#16c268" />
      <path d="M1 6Q1 13 6 13Q11 13 11 6M6 13V15M3 15.5H9" stroke="#7f8a86" />
    </svg>
    <div className="mx-[10px] h-5 w-px bg-[#55585c]" />
    <span>正在讲话:</span>
    <span className="ml-[10px]">左;</span>
    <svg viewBox="0 0 40 24" className="ml-auto h-6 w-10">
      <path d="M0 15L13 1L27 15L13 24Z" fill="#43464a" />
      <path d="M14 15L26 3L40 16V20L27 22Z" fill="#54575b" />
    </svg>
  </div>
);

const ImeBar = () => (
  <div className="absolute bottom-0 left-[1419px] flex items-end">
    <svg viewBox="0 0 30 30" className="relative z-10 -mr-1 size-[30px]">
      <path d="M1 5Q1 3 4 3L24 0Q27 0 27 3L30 23Q30 26 27 27L8 30Q5 30 4 27Z" fill="#e85a24" />
      <path d="M23 8Q8 4 9 11Q10 15 17 15Q24 16 22 20Q19 24 9 21" fill="none" stroke="#fff" strokeWidth="3.6" />
    </svg>
    <div className="flex h-[26px] items-center gap-2 bg-white px-[9px] text-[#1565c0] shadow">
      <span className="w-4 text-[15px] font-bold leading-4">中</span>
      <span className="w-4 text-center text-[15px] font-bold leading-4">°,</span>
      <svg viewBox="0 0 16 16" className="size-4" fill="#1565c0">
        <rect x="5" y="0" width="6" height="10" rx="3" />
        <path d="M2.5 7Q2.5 12.5 8 12.5T13.5 7M8 12V16" fill="none" stroke="#1565c0" strokeWidth="1.6" />
      </svg>
      <svg viewBox="0 0 16 16" className="size-4" fill="none" stroke="#1565c0" strokeWidth="1.6">
        <path d="M1 2.5H15V13.5H1ZM5 11H11" />
        <path d="M3 5.5H13M3 8.2H13" strokeDasharray="2 .67" />
      </svg>
      <svg viewBox="0 0 16 16" className="size-4 overflow-visible">
        <path d="M1 4L5 1Q8 4 11 1L15 4L13 8L12 7V15H4V7L3 8Z" fill="#a77ae8" />
        <path d="M1 4L5 1L6 8L3 8Z" fill="#e88a8f" />
        <circle cx="14" cy="0" r="3" fill="#ef5434" />
      </svg>
      <svg viewBox="0 0 16 16" className="size-4" fill="#1565c0">
        <path d="M4 2H12Q15 3 15 9L16 14L12 15L10 12H6L4 15L0 14L1 9Q1 3 4 2Z" />
        <path d="M3 7H7M5 5V9M10 7H13M11.5 5.5V8.5" stroke="#fff" strokeWidth="1.2" />
      </svg>
      <svg viewBox="0 0 16 16" className="size-4" fill="#1565c0">
        <rect x="1" y="1" width="6" height="6" rx="1.5" />
        <rect x="9" y="1" width="6" height="6" rx="3" />
        <rect x="1" y="9" width="6" height="6" rx="1.5" />
        <rect x="9" y="9" width="6" height="6" rx="1.5" />
      </svg>
      <svg viewBox="0 0 16 16" className="size-4" fill="none" stroke="#1565c0">
        <circle cx="8" cy="8" r="4.5" strokeWidth="3" />
        <circle cx="8" cy="8" r="6.8" strokeWidth="2" strokeDasharray="3 2.34" />
      </svg>
    </div>
  </div>
);

const App = () => {
  const green = "pointer-events-none absolute size-[120px] border-[#08d680]";
  return (
    <div className="relative flex h-screen flex-col overflow-hidden bg-[#dcdcdc] font-['DejaVu_Sans_Condensed','Noto_Sans','Noto_Sans_CJK_SC',sans-serif] text-[11px] leading-[16px] text-[#111]">
      <header className="flex h-[23px] shrink-0 items-center bg-white pl-[6px] font-['Roboto','Noto_Sans',sans-serif] text-[13px]">
        <svg viewBox="0 0 11 16" className="mr-[6px] mt-1 h-4 w-[11px]">
          <path d="M0 0H9L11 3V16H0Z" fill="#d9541e" />
          <path d="M2 10L5 3H6L9 10M3 8H8" fill="none" stroke="#fff" />
        </svg>
        <h1>Autodesk Alias AutoStudio 2023 Update 1.1</h1>
        <span className="ml-[18px]">- Panel-04 : "E:\Documents\WeChat Files\haiwanhaiwan\FileStorage\File\2024-08\Panel-04.wire"</span>
        <div className="ml-auto mr-[17px] flex gap-[30px]">
          <button aria-label="Minimize"><Line d="M3 8H13" /></button>
          <button aria-label="Restore"><Line d="M3 5H11V13H3ZM6 5V2H14V10H11" /></button>
          <button aria-label="Close"><Line d="M3 3L13 13M13 3L3 13" /></button>
        </div>
      </header>

      <div className="flex min-h-0 flex-1">
        <main className="flex min-w-0 flex-1 flex-col">
          <div className="flex">
            <button className="flex w-8 shrink-0 flex-col items-center border-r border-[#888] pl-1">
              <svg viewBox="0 0 28 29" className="h-[29px] w-7">
                <path d="M3 4L12 1L22 3V21L14 26L3 22Z" fill="url(#ash)" stroke="#aaa" />
                <path d="M3 4L14 7V26L3 22Z" fill="#b9b9bb" />
                <path d="M16 17L27 20L23 22L28 27L26 29L21 24L19 27Z" fill="#e8504a" />
              </svg>
              <span className="text-[10px]">comp</span>
            </button>
            <div className="min-w-0 flex-1">
              <div className="flex h-[27px]">
                <nav className="flex items-center gap-[15px] pl-[7px] pt-[3px]">
                  {menus.map((m) => (
                    <button key={m}>{m}</button>
                  ))}
                </nav>
                <div className="ml-auto mt-[7px] flex h-[19px] w-[137px] items-center gap-[6px] border border-b-0 border-[#888] bg-[#e4e4e4] pl-[2px] pt-1">
                  <svg viewBox="0 0 16 18" className="h-[17px] w-[14px]" fill="none" stroke="#fff" strokeWidth="2">
                    <circle cx="8" cy="6" r="4" />
                    <path d="M2 18Q2 11 8 11T14 18" />
                  </svg>
                  zuo haiwei
                </div>
              </div>
              <ModeBar />
            </div>
          </div>
          <LayerBar />
          <ViewHeader />
          <Viewport />
          <div className="flex h-[18px] items-center border-t border-black pl-2">Ready</div>
          <Shelves />
        </main>
        <ControlPanel />
      </div>

      <div className="absolute left-[1287px] top-0 flex h-[21px] w-[168px] items-center justify-between border border-black bg-[#cbcbcd] pl-[10px] pr-px">
        <span>Diagnostic Shade</span>
        <PanelIcons mid={DOWN} />
      </div>
      <ShareBar />
      <SpeakerToast />
      <button aria-label="Open list" className="absolute left-0 top-[901px] flex h-[29px] w-9 items-center justify-center rounded-r bg-[#555]/70">
        <svg viewBox="0 0 18 16" className="h-4 w-[18px]" stroke="#fff" strokeWidth="2">
          <path d="M1 2H3M6 2H17M4 8H6M8 8H17M1 14H3M6 14H17" />
        </svg>
      </button>
      <div className="absolute bottom-[62px] right-[23px] flex h-[53px] w-[138px] items-center justify-center rounded-lg border-2 border-[#7fe3f2] bg-[#9694c8] text-[36px] text-white">
        &lt;左键&gt;
      </div>
      <ImeBar />

      <div className={`${green} left-0 top-0 border-l-6 border-t-6`} />
      <div className={`${green} right-0 top-0 border-r-6 border-t-6`} />
      <div className={`${green} bottom-0 left-0 border-b-6 border-l-6`} />
      <div className={`${green} bottom-0 right-0 border-b-6 border-r-6`} />
    </div>
  );
};

export default App;
